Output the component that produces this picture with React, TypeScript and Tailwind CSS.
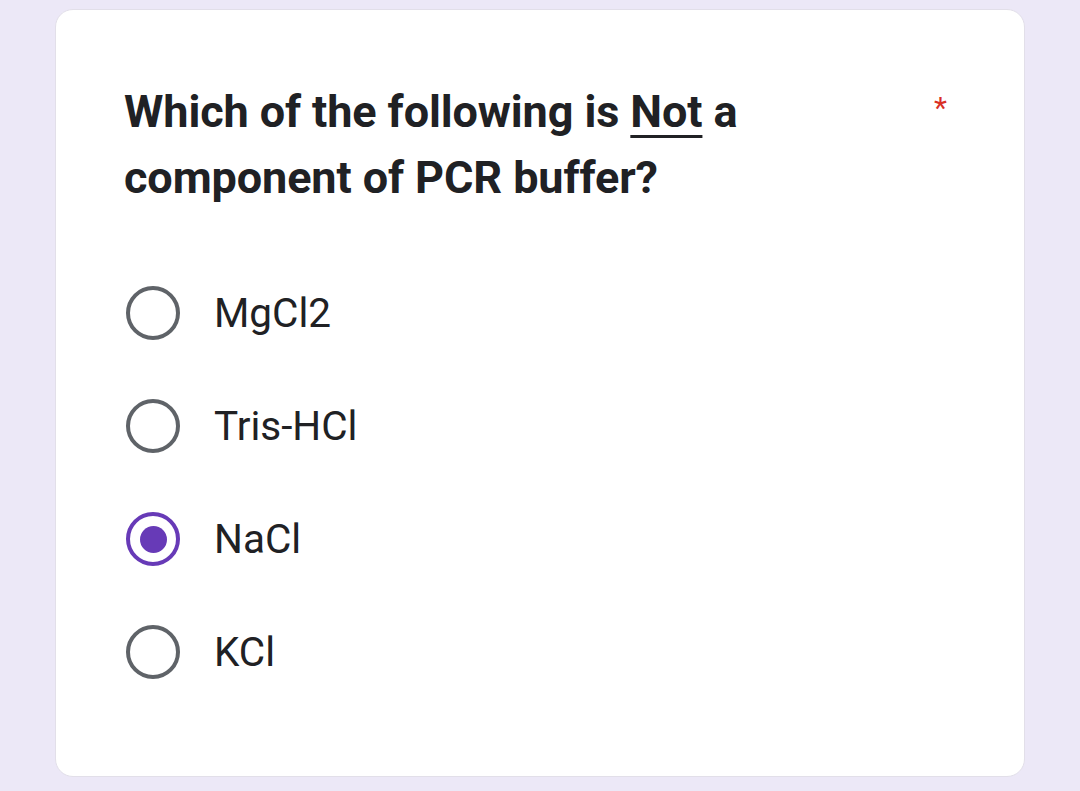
import { useState } from 'react'

const options = ['MgCl2', 'Tris-HCl', 'NaCl', 'KCl']

export default function App() {
  const [selected, setSelected] = useState('NaCl')

  return (
    <main className="w-[1080px] h-[791px] bg-[#ece8f7] pt-[9px] pl-[55px] font-['Roboto',sans-serif]">
      <div className="w-[970px] h-[768px] bg-white rounded-[18px] border border-[#e2dfe9] pl-[68px] pr-[77px] pt-[69px]">
        {/* Question */}
        <div className="flex justify-between">
          <h1 className="text-[45px] leading-[66px] font-bold text-[#202124] tracking-[-0.1px]">
            Which of the following is <span className="underline underline-offset-[8px] decoration-[3px]">Not</span> a
            <br />
            component of PCR buffer?
          </h1>
          <span className="text-[#d93025] text-[30px] leading-none mt-[14px]">*</span>
        </div>

        {/* Options */}
        <div className="mt-[75px] flex flex-col gap-[59px]">
          {options.map((opt) => {
            const isOn = selected === opt
            return (
              <label key={opt} className="flex items-center gap-[34px] h-[54px] pl-[2px] cursor-pointer" onClick={() => setSelected(opt)}>
                <span
                  className={
                    isOn
                      ? 'w-[54px] h-[54px] rounded-full border-[4.5px] border-[#673ab7] flex items-center justify-center shrink-0'
                      : 'w-[54px] h-[54px] rounded-full border-[4.5px] border-[#5f6368] shrink-0'
                  }
                >
                  {isOn && <span className="w-[27px] h-[27px] rounded-full bg-[#673ab7]" />}
                </span>
                <span className="text-[40.5px] text-[#202124]">{opt}</span>
              </label>
            )
          })}
        </div>
      </div>
    </main>
  )
}
